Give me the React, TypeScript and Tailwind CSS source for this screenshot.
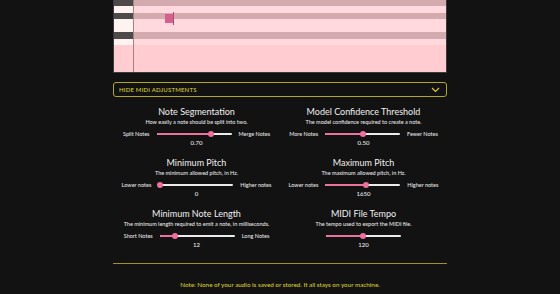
import React from 'react'

type Setting = {
  title: string
  desc: string
  left?: string
  right?: string
  value: string
  pos: number
}

const settings: Setting[] = [
  { title: 'Note Segmentation', desc: 'How easily a note should be split into two.', left: 'Split Notes', right: 'Merge Notes', value: '0.70', pos: 0.72 },
  { title: 'Model Confidence Threshold', desc: 'The model confidence required to create a note.', left: 'More Notes', right: 'Fewer Notes', value: '0.50', pos: 0.5 },
  { title: 'Minimum Pitch', desc: 'The minimum allowed pitch, in Hz.', left: 'Lower notes', right: 'Higher notes', value: '0', pos: 0.02 },
  { title: 'Maximum Pitch', desc: 'The maximum allowed pitch, in Hz.', left: 'Lower notes', right: 'Higher notes', value: '1650', pos: 0.54 },
  { title: 'Minimum Note Length', desc: 'The minimum length required to emit a note, in milliseconds.', left: 'Short Notes', right: 'Long Notes', value: '12', pos: 0.2 },
  { title: 'MIDI File Tempo', desc: 'The tempo used to export the MIDI file.', value: '120', pos: 0.49 },
]

// piano roll rows: [height, black key?]
const rows: [number, boolean][] = [
  [6, true],
  [7, false],
  [6, true],
  [13, false],
  [7, true],
  [6, false],
]

function Slider({ pos }: { pos: number }) {
  return (
    <div className="relative w-[75px] h-[6px] flex items-center">
      <div className="w-full h-[2px] rounded-full bg-[#ececec]" />
      <div className="absolute left-0 h-[2px] rounded-full bg-[#e9739c]" style={{ width: `${pos * 100}%` }} />
      <div
        className="absolute w-[6px] h-[6px] rounded-full bg-[#ef6f9d] -translate-x-1/2"
        style={{ left: `${pos * 100}%` }}
      />
    </div>
  )
}

export default function App() {
  return (
    <div className="min-h-[294px] bg-[#121212] font-['Lato','Liberation_Sans',sans-serif]">
      <div className="w-[334px] mx-auto">
        {/* piano roll */}
        <div className="relative h-[73px] bg-[#ffccd2] border-x border-b border-[#3a3a3a] flex flex-col">
          {rows.map(([h, black], i) => (
            <div key={i} className="flex" style={{ height: h }}>
              <div className={`w-[19px] ${black ? 'bg-[#4e4a4a]' : 'bg-[#fff3f1]'}`} />
              <div className={`flex-1 ${black ? 'bg-[#d3aaae]' : 'bg-[#ffd9dd]'}`} />
            </div>
          ))}
          <div className="absolute left-[19px] top-0 bottom-0 w-px bg-[#9b8587]" />
          <div className="absolute left-[51px] top-[14px] w-[9px] h-[9px] bg-[#d6608d]" />
          <div className="absolute left-[59px] top-[12px] w-px h-[13px] bg-[#b04a72]" />
        </div>

        {/* accordion */}
        <div className="mt-[9px] h-[15px] border border-[#b3a623] rounded-[3px] flex items-center justify-between pl-[5px] pr-[6px]">
          <span className="text-[6px] font-medium text-[#ddd02d] uppercase tracking-[0.2px]">Hide MIDI Adjustments</span>
          <svg width="9" height="6" viewBox="0 0 9 6" fill="none" stroke="#ddd02d" strokeWidth="1.1">
            <path d="M1 1l3.5 3.5L8 1" />
          </svg>
        </div>

        {/* settings grid */}
        <div className="mt-[9px] grid grid-cols-2 gap-y-[10px]">
          {settings.map((s) => (
            <div key={s.title} className="flex flex-col items-center">
              <div className="text-[9px] leading-[12px] text-[#f0f0f0]">{s.title}</div>
              <div className="text-[5.5px] font-medium leading-[8px] text-[#e6e6e6] whitespace-nowrap">{s.desc}</div>
              <div className="mt-[4px] h-[8px] flex items-center gap-[7px]">
                {s.left && <span className="text-[5.5px] font-medium text-[#e6e6e6] whitespace-nowrap">{s.left}</span>}
                <Slider pos={s.pos} />
                {s.right && <span className="text-[5.5px] font-medium text-[#e6e6e6] whitespace-nowrap">{s.right}</span>}
              </div>
              <div className="mt-[1px] text-[6px] font-medium leading-[8px] text-[#ececec]">{s.value}</div>
            </div>
          ))}
        </div>

        <div className="mt-[14px] h-px bg-[#9c9420]" />
        <div className="mt-[16px] text-center text-[6.3px] font-medium leading-[10px] text-[#d8cb30]">
          Note: None of your audio is saved or stored. It all stays on your machine.
        </div>
      </div>
    </div>
  )
}
